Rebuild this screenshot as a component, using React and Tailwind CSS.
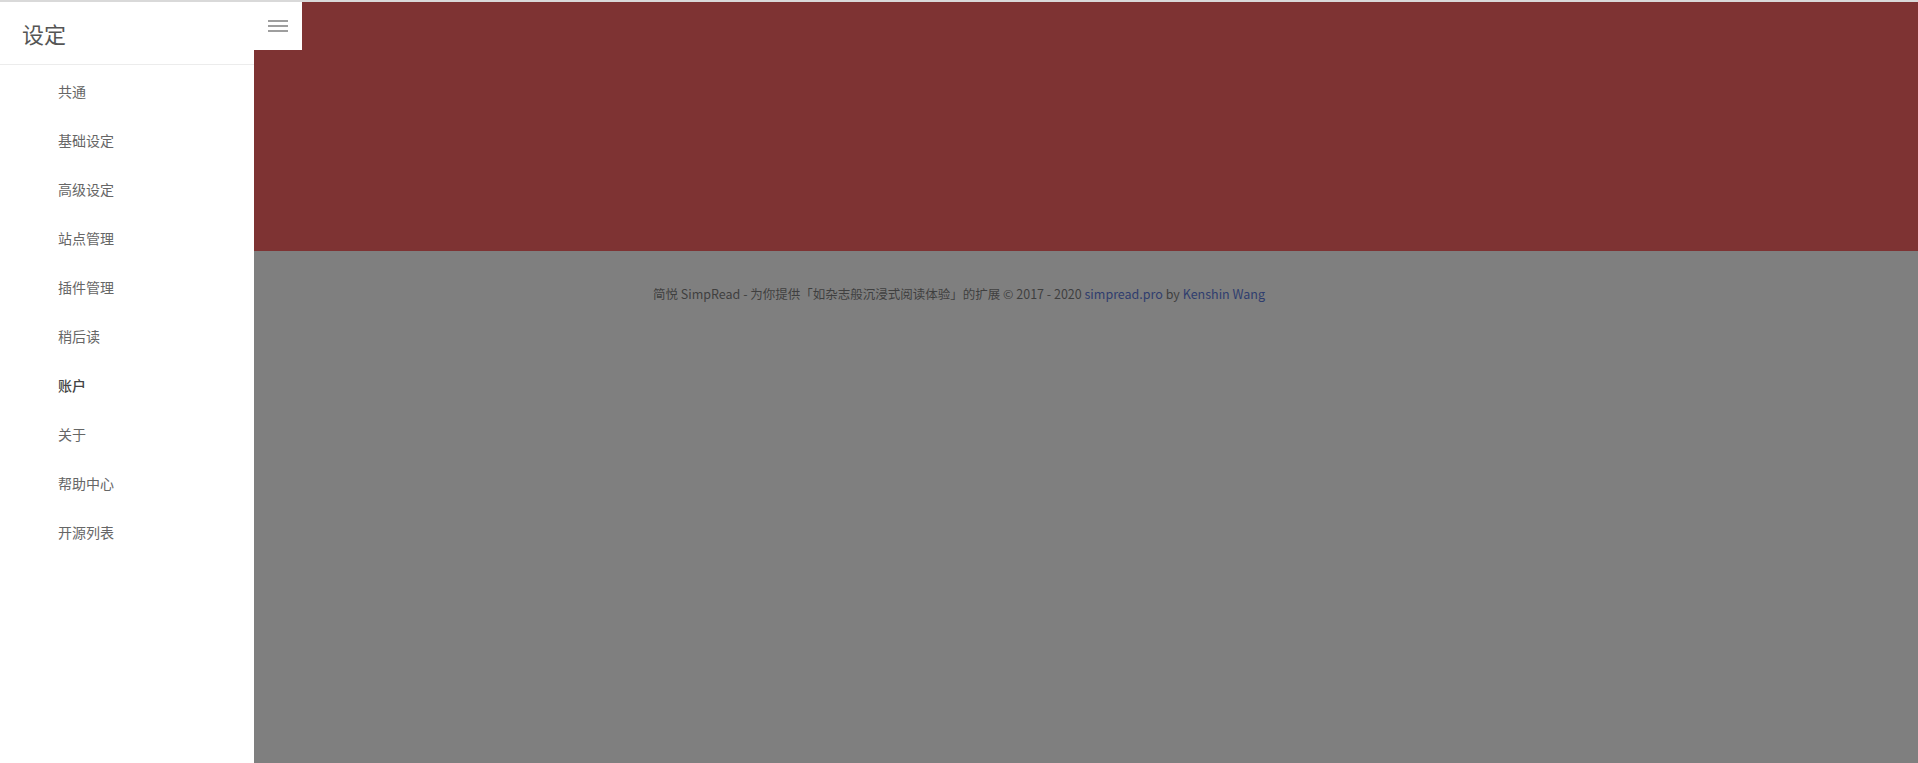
import React from "react";

const items = ["共通", "基础设定", "高级设定", "站点管理", "插件管理", "稍后读", "账户", "关于", "帮助中心", "开源列表"];

export default function App() {
  const cjk = { fontFamily: '"Noto Sans CJK SC", "Noto Sans", sans-serif' };
  return (
    <div className="relative w-[1918px] h-[763px] overflow-hidden bg-[#7f7f7f]" style={cjk}>
      <div className="h-[2px] bg-[#d9d9d9]" />
      <div className="h-[249px] bg-[#7e3333]" />
      <div className="pt-[33px] text-center text-[12.5px] leading-[20px] text-[#3f3f3f]">
        简悦 SimpRead - 为你提供「如杂志般沉浸式阅读体验」的扩展 © 2017 - 2020{" "}
        <span className="text-[#2f3d6e]">simpread.pro</span> by{" "}
        <span className="text-[#2f3d6e]">Kenshin Wang</span>
      </div>

      <aside className="absolute left-0 top-[2px] bottom-0 w-[254px] bg-white flex flex-col">
        <div className="h-[63px] border-b border-[#ececec] flex items-center pl-[22px] text-[22px] text-[#555555]">
          设定
        </div>
        <ul className="pt-[2px]">
          {items.map((t) => (
            <li
              key={t}
              className={
                "h-[49px] flex items-center pl-[58px] text-[14px] " +
                (t === "账户" ? "text-[#444444] font-medium" : "text-[#666666]")
              }
            >
              {t}
            </li>
          ))}
        </ul>
        <button className="absolute left-[254px] top-0 w-[48px] h-[48px] bg-white flex flex-col items-center justify-center gap-[3px]">
          <span className="block w-[20px] h-[2px] bg-[#9e9e9e]" />
          <span className="block w-[20px] h-[2px] bg-[#9e9e9e]" />
          <span className="block w-[20px] h-[2px] bg-[#9e9e9e]" />
        </button>
      </aside>
    </div>
  );
}
